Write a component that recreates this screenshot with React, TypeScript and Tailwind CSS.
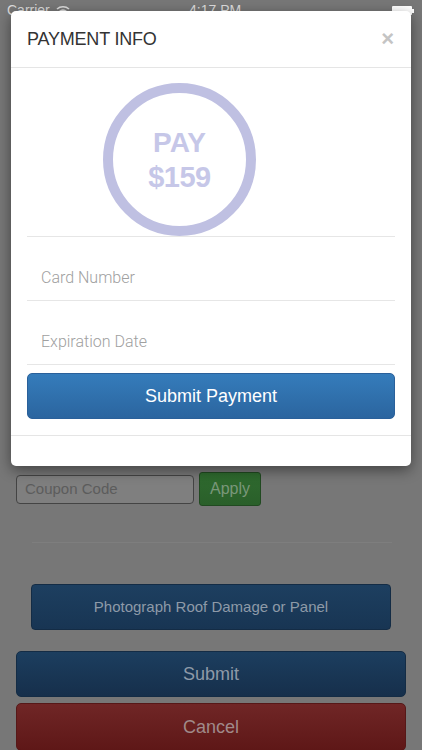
import React from "react";

export default function App() {
  const sans = { fontFamily: '"Liberation Sans", Arial, sans-serif' };
  const light = { fontFamily: 'Roboto, "Liberation Sans", sans-serif' };
  return (
    <div
      className="relative w-[422px] h-[750px] overflow-hidden bg-[#777777]"
      style={sans}
    >
      {/* status bar */}
      <div className="relative h-[20px] flex items-center px-[7px] text-[14px] text-[#dcdcdc]">
        <div className="flex items-center gap-[6px]">
          <span className="leading-none">Carrier</span>
          <svg width="14" height="10" viewBox="0 0 14 10" className="text-[#dcdcdc]">
            <path d="M1 4 A9 9 0 0 1 13 4" stroke="currentColor" strokeWidth="1.6" fill="none" />
            <path d="M3.5 6.5 A5.5 5.5 0 0 1 10.5 6.5" stroke="currentColor" strokeWidth="1.6" fill="none" />
            <circle cx="7" cy="9" r="1.3" fill="currentColor" />
          </svg>
        </div>
        <span className="absolute left-[189px] leading-none">4:17 PM</span>
        <div className="absolute left-[392px] top-[6px] w-[20px] h-[9px] bg-white rounded-[1px]" />
        <div className="absolute left-[412px] top-[9px] w-[2px] h-[4px] bg-white" />
      </div>

      {/* underlying page */}
      <div className="mt-[452px] flex flex-col">
        <div className="flex items-center gap-[5px] pl-[16px]">
          <div className="w-[178px] h-[29px] rounded-[4px] border border-[#444] bg-[#7f7f7f] flex items-center px-[8px] text-[15px] text-[#5c5c5c]">
            Coupon Code
          </div>
          <div className="w-[62px] h-[34px] rounded-[3px] border border-[#214a21] bg-linear-to-b from-[#2f6b2f] to-[#2a5f2a] flex items-center justify-center text-[16px] text-[#7a977a]">
            Apply
          </div>
        </div>
        <div className="ml-[32px] w-[360px] h-px bg-[#7e7e7e] mt-[36px]" />
        <div className="ml-[31px] w-[360px] h-[46px] mt-[41px] rounded-[4px] border border-[#142c45] bg-linear-to-b from-[#1d3f60] to-[#183553] flex items-center justify-center text-[15px] text-[#8e9aa8]">
          Photograph Roof Damage or Panel
        </div>
        <div className="ml-[16px] w-[390px] h-[46px] mt-[21px] rounded-[5px] border border-[#142c45] bg-linear-to-b from-[#1c3e5f] to-[#162f4b] flex items-center justify-center text-[18px] text-[#8e9aa8]">
          Submit
        </div>
        <div className="ml-[16px] w-[390px] h-[48px] mt-[6px] rounded-[5px] border border-[#561818] bg-linear-to-b from-[#702626] to-[#5e1717] flex items-center justify-center text-[18px] text-[#a08a8a]">
          Cancel
        </div>
      </div>

      {/* modal */}
      <div className="absolute left-[11px] top-[11px] w-[400px] h-[455px] bg-white rounded-[5px] shadow-[0_4px_14px_rgba(0,0,0,0.45)] flex flex-col">
        <div className="h-[57px] border-b border-[#e5e5e5] flex items-center justify-between pl-[16px] pr-[17px]">
          <span className="text-[18px] text-[#333] tracking-[-0.2px]">PAYMENT INFO</span>
          <span className="text-[22px] font-bold text-[#c4c4c4] leading-none">×</span>
        </div>
        <div className="px-[16px] flex flex-col">
          <div className="mt-[15px] ml-[76px] w-[153px] h-[153px] rounded-full border-[10px] border-[#bfc0e2] flex flex-col items-center justify-center">
            <span className="text-[28px] leading-[35px] font-bold text-[#c6c7e8]">PAY</span>
            <span className="text-[29px] leading-[35px] font-bold text-[#c6c7e8] tracking-[-0.5px]">$159</span>
          </div>
          <div className="h-px bg-[#e6e6e6]" />
          <div
            className="h-[64px] border-b border-[#e6e6e6] flex items-center pt-[18px] px-[14px] text-[16px] font-light text-[#a0a0a0]"
            style={light}
          >
            Card Number
          </div>
          <div
            className="h-[64px] border-b border-[#e6e6e6] flex items-center pt-[18px] px-[14px] text-[16px] font-light text-[#a0a0a0]"
            style={light}
          >
            Expiration Date
          </div>
          <div className="mt-[8px] h-[46px] rounded-[5px] border border-[#2a609a] bg-linear-to-b from-[#357cbb] to-[#2b659f] flex items-center justify-center text-[18px] text-white">
            Submit Payment
          </div>
        </div>
        <div className="mt-[16px] border-t border-[#e5e5e5] flex-1" />
      </div>
    </div>
  );
}
